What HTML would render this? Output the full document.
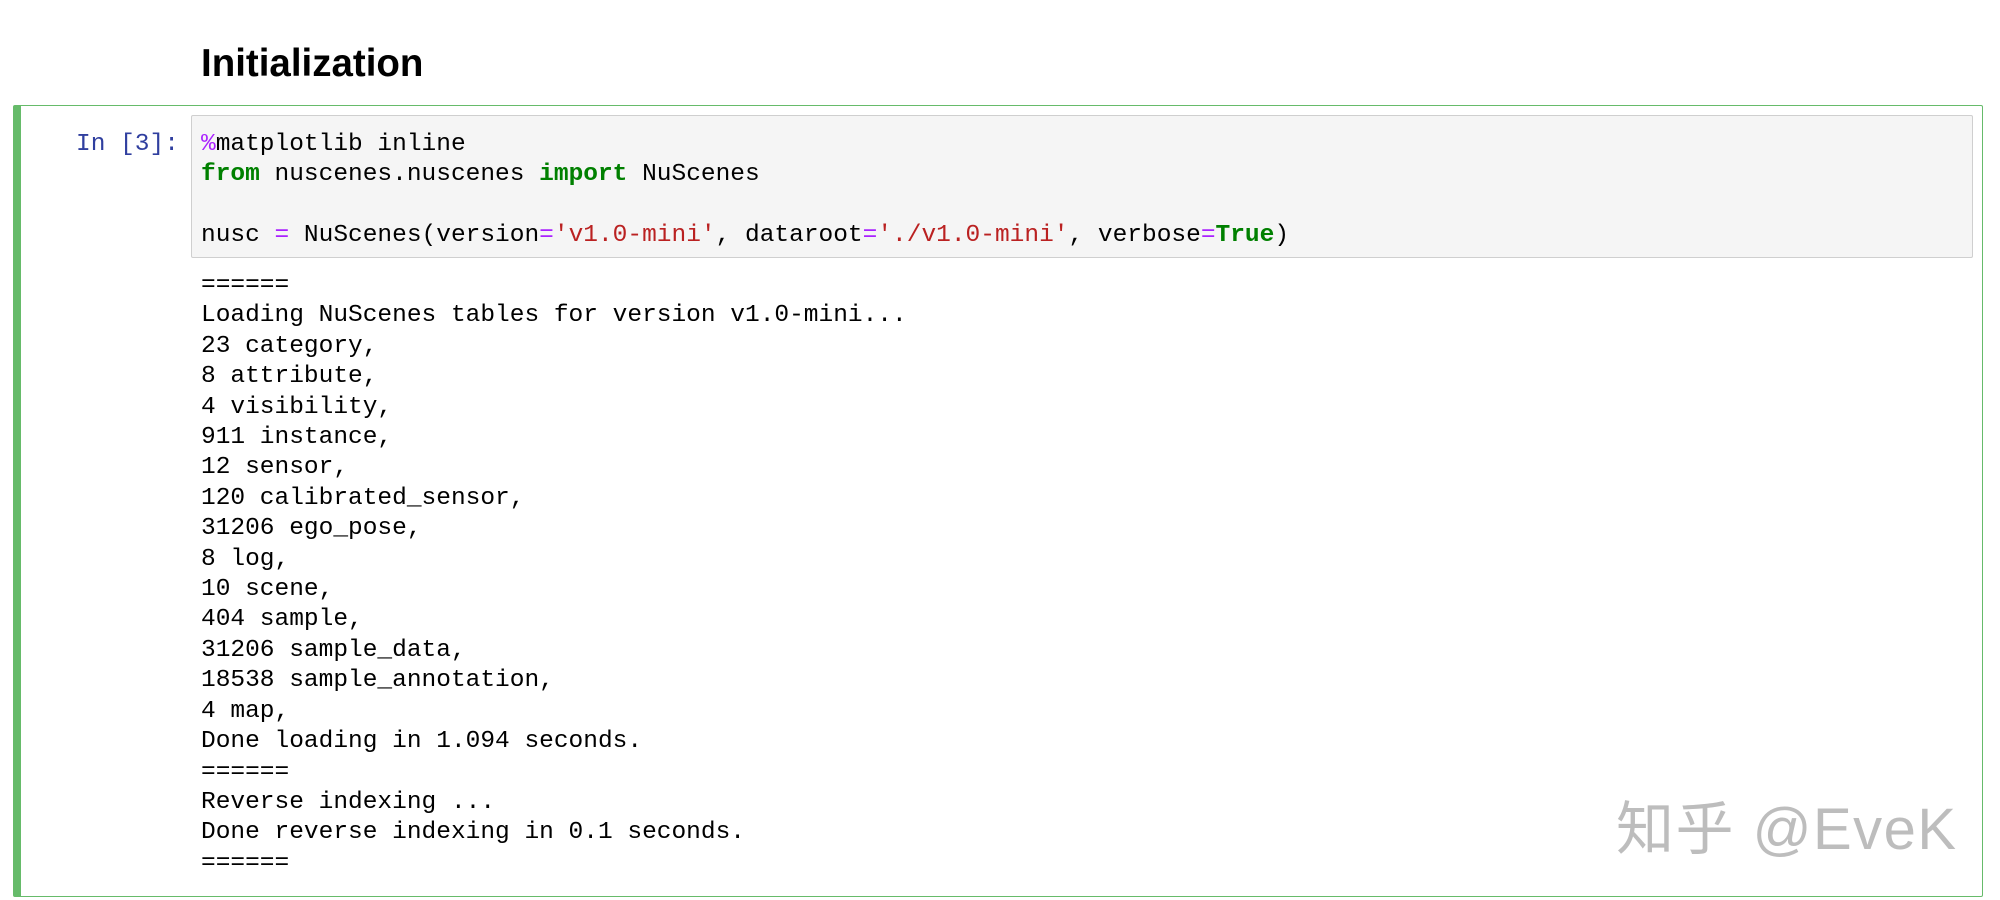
<!DOCTYPE html>
<html><head><meta charset="utf-8"><style>
body{margin:0;width:2000px;height:900px;background:#fff;position:relative;overflow:hidden;font-family:"Liberation Sans",sans-serif}
h1{position:absolute;left:201px;top:39px;margin:0;font-size:38.5px;font-weight:bold;line-height:50px;color:#000}
.cell{position:absolute;left:13px;top:105px;width:1970px;height:792px;border:1.5px solid #66bb6a;border-left:8px solid #66bb6a;border-radius:2px;box-sizing:border-box}
.prompt{position:absolute;left:76px;top:130px;font-family:"Liberation Mono",monospace;font-size:24.5px;color:#303F9F;line-height:30.4px}
.input{position:absolute;left:191px;top:115px;width:1782px;height:143px;background:#f5f5f5;border:1px solid #cfcfcf;border-radius:2px;box-sizing:border-box}
pre{margin:0;font-family:"Liberation Mono",monospace;font-size:24.5px;line-height:30.4px;color:#000;position:absolute;left:201px}
.k{color:#008000;font-weight:bold}.o{color:#AA22FF}.s{color:#BA2121}
.wm{position:absolute;left:1616px;top:782px;font-family:"Liberation Sans","Noto Sans CJK SC",sans-serif;font-size:58px;color:#bdbdbd;letter-spacing:1.5px}
</style></head><body>
<h1>Initialization</h1>
<div class="cell"></div>
<div class="prompt">In [3]:</div>
<div class="input"></div>
<pre style="top:130px"><span class="o">%</span>matplotlib inline
<span class="k">from</span> nuscenes.nuscenes <span class="k">import</span> NuScenes

nusc <span class="o">=</span> NuScenes(version<span class="o">=</span><span class="s">'v1.0-mini'</span>, dataroot<span class="o">=</span><span class="s">'./v1.0-mini'</span>, verbose<span class="o">=</span><span class="k">True</span>)</pre>
<pre style="top:271px">======
Loading NuScenes tables for version v1.0-mini...
23 category,
8 attribute,
4 visibility,
911 instance,
12 sensor,
120 calibrated_sensor,
31206 ego_pose,
8 log,
10 scene,
404 sample,
31206 sample_data,
18538 sample_annotation,
4 map,
Done loading in 1.094 seconds.
======
Reverse indexing ...
Done reverse indexing in 0.1 seconds.
======</pre>
<div class="wm">知乎 @EveK</div>
</body></html>
